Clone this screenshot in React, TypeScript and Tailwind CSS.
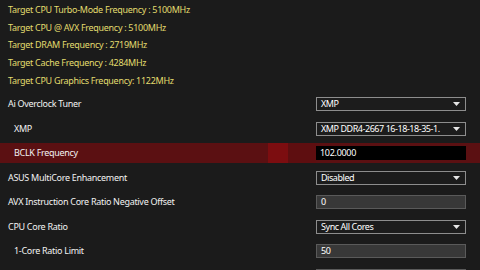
import React from "react";

const font = { fontFamily: '"Noto Sans", "Open Sans", sans-serif' };

function Arrow() {
  return (
    <svg width="7" height="4" viewBox="0 0 7 4" className="shrink-0">
      <path d="M0 0 H7 L3.5 4 Z" fill="#e6e6e6" />
    </svg>
  );
}

const txt = "text-[9px] leading-[12px] tracking-[-0.3px] whitespace-nowrap";

function Dropdown({ value }: { value: string }) {
  return (
    <div className={"flex h-[14px] w-[150px] items-center justify-between gap-[2px] border border-[#8d8d8d] bg-[#1c1c1c] pl-[4px] pr-[5px] text-white " + txt}>
      <span className="tracking-[-0.45px]">{value}</span>
      <Arrow />
    </div>
  );
}

function Field({ value, dark }: { value: string; dark?: boolean }) {
  return (
    <div
      className={
        (dark
          ? "flex h-[14px] w-[150px] items-center bg-black pl-[4px] text-white "
          : "flex h-[14px] w-[150px] items-center border border-[#5a5a5a] bg-[#383838] pl-[4px] text-white ") + txt
      }
    >
      {value}
    </div>
  );
}

function Row({
  label,
  indent,
  children,
}: {
  label: string;
  indent?: boolean;
  children: React.ReactNode;
}) {
  return (
    <div className="flex h-[24.5px] items-center">
      <div className={(indent ? "pl-[14px]" : "pl-[8px]") + " w-[316px] text-[#f2f2f2] " + txt}>
        {label}
      </div>
      {children}
    </div>
  );
}

export default function App() {
  const yellow = [
    "Target CPU Turbo-Mode Frequency : 5100MHz",
    "Target CPU @ AVX Frequency : 5100MHz",
    "Target DRAM Frequency : 2719MHz",
    "Target Cache Frequency : 4284MHz",
    "Target CPU Graphics Frequency: 1122MHz",
  ];
  return (
    <div className="h-[270px] w-[480px] overflow-hidden bg-[#1b1b1b] pt-[1px]" style={font}>
      {yellow.map((t) => (
        <div key={t} className={"flex h-[17.75px] items-center pl-[8px] text-[#e2dc6e] " + txt}>
          {t}
        </div>
      ))}
      <div className="h-[2px]" />
      <Row label="Ai Overclock Tuner">
        <Dropdown value="XMP" />
      </Row>
      <Row label="XMP" indent>
        <Dropdown value="XMP DDR4-2667 16-18-18-35-1." />
      </Row>
      <div className="flex h-[24.5px] items-center">
        <div className="flex h-[20px] w-full items-center bg-[#5b1012]">
          <div className={"w-[268px] pl-[14px] text-[#f2f2f2] " + txt}>BCLK Frequency</div>
          <div className="h-full w-[20px] bg-[#7c0d10]" />
          <div className="h-full w-[28px] bg-[#5e0e10]" />
          <Field value="102.0000" dark />
        </div>
      </div>
      <Row label="ASUS MultiCore Enhancement">
        <Dropdown value="Disabled" />
      </Row>
      <Row label="AVX Instruction Core Ratio Negative Offset">
        <Field value="0" />
      </Row>
      <Row label="CPU Core Ratio">
        <Dropdown value="Sync All Cores" />
      </Row>
      <Row label="1-Core Ratio Limit" indent>
        <Field value="50" />
      </Row>
      <Row label="">
        <Field value="" />
      </Row>
    </div>
  );
}
